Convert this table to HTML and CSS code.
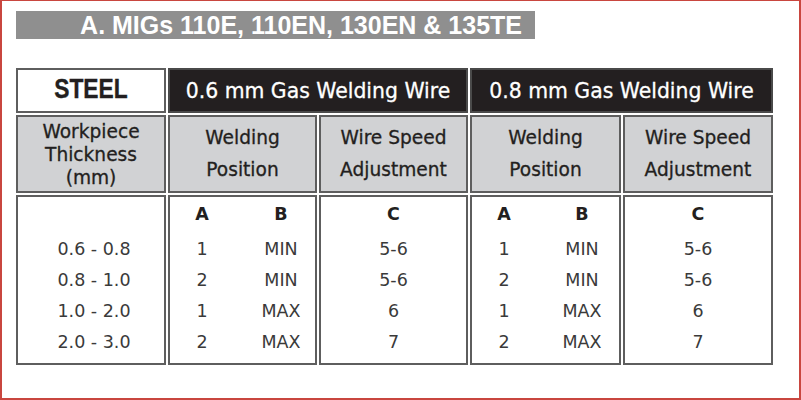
FILE: index.html
```html
<!DOCTYPE html>
<html>
<head>
<meta charset="utf-8">
<link rel="stylesheet" href="styles.css">
</head>
<body>
<div class="sheet">
  <div class="banner">A. MIGs 110E, 110EN, 130EN &amp; 135TE</div>
  <div class="table">
    <div class="cell steel"><span class="narrow">STEEL</span></div>
    <div class="cell dark span2">0.6 mm Gas Welding Wire</div>
    <div class="cell dark span2">0.8 mm Gas Welding Wire</div>

    <div class="cell grey tight"><span>Workpiece</span><span>Thickness</span><span>(mm)</span></div>
    <div class="cell grey"><span>Welding</span><span>Position</span></div>
    <div class="cell grey"><span>Wire Speed</span><span>Adjustment</span></div>
    <div class="cell grey"><span>Welding</span><span>Position</span></div>
    <div class="cell grey"><span>Wire Speed</span><span>Adjustment</span></div>

    <div class="cell data thick">
      <div class="head"></div>
      <div class="val">0.6 - 0.8</div>
      <div class="val">0.8 - 1.0</div>
      <div class="val">1.0 - 2.0</div>
      <div class="val">2.0 - 3.0</div>
    </div>
    <div class="cell data pair">
      <div class="head">A</div><div class="head b">B</div>
      <div class="val">1</div><div class="val b">MIN</div>
      <div class="val">2</div><div class="val b">MIN</div>
      <div class="val">1</div><div class="val b">MAX</div>
      <div class="val">2</div><div class="val b">MAX</div>
    </div>
    <div class="cell data">
      <div class="head">C</div>
      <div class="val">5-6</div>
      <div class="val">5-6</div>
      <div class="val">6</div>
      <div class="val">7</div>
    </div>
    <div class="cell data pair pair2">
      <div class="head">A</div><div class="head b">B</div>
      <div class="val">1</div><div class="val b">MIN</div>
      <div class="val">2</div><div class="val b">MIN</div>
      <div class="val">1</div><div class="val b">MAX</div>
      <div class="val">2</div><div class="val b">MAX</div>
    </div>
    <div class="cell data">
      <div class="head">C</div>
      <div class="val">5-6</div>
      <div class="val">5-6</div>
      <div class="val">6</div>
      <div class="val">7</div>
    </div>
  </div>
</div>
</body>
</html>
```
FILE: styles.css
```css
* { box-sizing: border-box; }
html, body { margin: 0; padding: 0; background: #fff; }
.sheet {
  width: 801px;
  height: 400px;
  border: 2px solid #c9463f;
  border-top-width: 1px;
  padding: 10px 0 0 14px;
  font-family: "DejaVu Sans", sans-serif;
  color: #231f20;
}
.banner {
  width: 519px;
  height: 28px;
  background: #8f8f8f;
  color: #fff;
  font-family: "Liberation Sans", Arial, sans-serif;
  font-weight: bold;
  font-size: 25px;
  line-height: 28px;
  text-align: right;
  padding-right: 13px;
  white-space: nowrap;
}
.table {
  margin-top: 29px;
  display: grid;
  grid-template-columns: 150px 149px 149px 151px 150px;
  grid-template-rows: 45px 78px 170px;
  gap: 2px;
}
.cell {
  border: 2px solid #5e5e5e;
  background: #fff;
}
.steel {
  display: flex;
  align-items: center;
  justify-content: center;
  font-family: "Liberation Sans", Arial, sans-serif;
  font-weight: bold;
  font-size: 28.5px;
  padding-bottom: 5px;
}
.narrow {
  display: inline-block;
  transform: scaleX(0.8);
  -webkit-text-stroke: 0.4px #231f20;
}
.dark {
  background: #231f20;
  border-color: #4a4a4a;
  color: #fff;
  display: flex;
  align-items: center;
  justify-content: center;
  font-size: 20.4px;
  -webkit-text-stroke: 0.3px #fff;
}
.span2 { grid-column: span 2; }
.grey {
  background: #d1d2d4;
  display: flex;
  flex-direction: column;
  align-items: center;
  justify-content: center;
  font-size: 18.6px;
  line-height: 32px;
  -webkit-text-stroke: 0.3px #231f20;
}
.grey.tight { line-height: 23px; font-size: 18.6px; }
.data {
  display: grid;
  grid-template-columns: 1fr;
  grid-template-rows: 35px;
  grid-auto-rows: 31.3px;
  padding-top: 1.5px;
  align-content: start;
  font-size: 17.5px;
  color: #3a3a3a;
  text-align: center;
}
.data .head {
  font-weight: bold;
  color: #231f20;
  line-height: 31px;
}
.data .val { line-height: 31.3px; }
.data.thick { padding-left: 6px; }
.pair { grid-template-columns: 64px 1fr; }
.pair .b { padding-left: 13px; }
.pair2 .b { padding-left: 9px; }
```
